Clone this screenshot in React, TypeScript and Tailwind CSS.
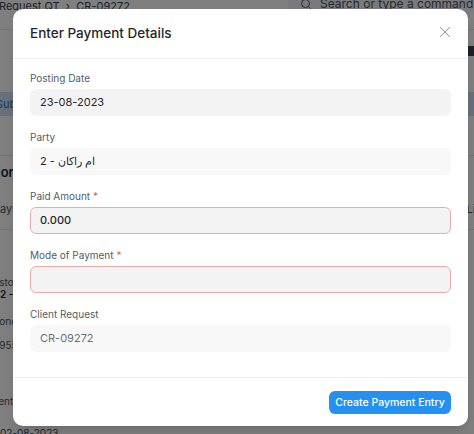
import { X, Search } from 'lucide-react'

interface FieldProps {
  label: string;
  value?: string;
  required?: boolean;
  tone?: 'normal' | 'error' | 'readonly' | 'muted';
}

const Field: React.FC<FieldProps> = ({ label, value, required, tone = 'normal' }) => {
  const box =
    tone === 'error'
      ? 'bg-[#f3f3f3] border border-[#eeaaaa] text-[#1f272e] font-medium'
      : tone === 'readonly'
        ? 'bg-[#f8f8f8] border border-transparent text-[#1f272e]'
        : tone === 'muted'
          ? 'bg-[#f8f8f8] border border-transparent text-[#6b7280]'
          : 'bg-[#f3f3f3] border border-transparent text-[#1f272e]'

  return (
    <div className="mb-[15px]">
      <div className="mb-[5px] flex h-[12px] items-center text-[10px] leading-none text-[#525c66]">
        {label}
        {required && <span className="ml-[3px] text-[#e35a5a]">*</span>}
      </div>
      <div className={`flex h-[27px] items-center rounded-[6px] pl-[9px] text-[11px] ${box}`}>
        {value}
      </div>
    </div>
  )
}

export default function App() {
  return (
    <div className="relative h-[434px] w-[474px] overflow-hidden bg-white font-['Inter',sans-serif]">
      {/* page behind the dialog */}
      <div className="flex flex-col text-[#1f272e]">
        <div className="flex h-[30px] items-start border-b border-gray-200">
          <div className="-ml-[1px] -mt-[2px] whitespace-nowrap text-[11px] text-gray-700">Request QT &nbsp;›&nbsp; CR-09272</div>
          <div className="ml-auto -mt-[6px] flex h-[20px] w-[186px] items-center gap-2 overflow-hidden whitespace-nowrap rounded-md bg-gray-100 pl-[12px] text-[12px] text-gray-600">
            <Search size={12} className="shrink-0" />
            Search or type a command (Ctrl+G)
          </div>
        </div>
        <div className="flex h-[62px] items-start justify-end pt-[16px]">
          <div className="h-[10px] w-[10px] bg-gray-700" />
        </div>
        <div className="flex h-[24px] items-stretch justify-between">
          <div className="-ml-[10px] flex items-center rounded-r bg-[#cfe3f8] px-[6px] text-[11px] text-[#2a6fb5]">Submit</div>
          <div className="w-[20px] bg-[#cfe3f8]" />
        </div>
        <div className="h-[40px] border-b border-gray-200" />
        <div className="flex h-[34px] items-center text-[13px] font-semibold">
          <span className="-ml-[31px]">Section</span>
        </div>
        <div className="flex h-[40px] items-center justify-between border-b border-gray-200 text-[11px] text-gray-600">
          <span className="-ml-[7px]">Payment</span>
          <span className="-mr-[14px]">Link</span>
        </div>
        <div className="h-[46px]" />
        <div className="flex h-[12px] items-center text-[10px] text-gray-600">
          <span className="-ml-[14px]">Customer</span>
        </div>
        <div className="flex h-[13px] items-center text-[10px] font-semibold">
          <span>2 - ام راكان</span>
        </div>
        <div className="flex h-[28px] items-end text-[10px] text-gray-600">
          <span className="-ml-[13px]">Phone</span>
        </div>
        <div className="flex h-[24px] items-end text-[10px] text-gray-600">
          <span className="-ml-[7px]">0955123456</span>
        </div>
        <div className="flex h-[56px] items-end text-[10px] text-gray-600">
          <span className="-ml-[14px]">Client</span>
        </div>
        <div className="flex h-[32px] items-end text-[10px] text-gray-700">
          <span>02-08-2023</span>
        </div>
      </div>

      <div className="absolute inset-0 bg-black/50" />

      {/* dialog */}
      <div className="absolute left-[13px] top-[9px] w-[455px] rounded-[10px] bg-white shadow-lg">
        <div className="flex h-[50px] items-center justify-between border-b border-[#ededed] px-[17px]">
          <h2 className="text-[13.5px] font-medium text-[#1f272e]">Enter Payment Details</h2>
          <X size={18} strokeWidth={1.4} className="mr-[-3px] mt-[-4px] text-[#8d99a6]" />
        </div>

        <div className="px-[17px] pb-[10px] pt-[13px]">
          <Field label="Posting Date" value="23-08-2023" />
          <Field label="Party" value="ام راكان - 2" tone="readonly" />
          <Field label="Paid Amount" value="0.000" required tone="error" />
          <Field label="Mode of Payment" required tone="error" />
          <Field label="Client Request" value="CR-09272" tone="muted" />
        </div>

        <div className="flex justify-end border-t border-[#ededed] px-[17px] pb-[12px] pt-[13px]">
          <button className="flex h-[23px] w-[122px] items-center justify-center rounded-[6px] bg-[#2490ef] text-[10.5px] font-medium text-white">
            Create Payment Entry
          </button>
        </div>
      </div>
    </div>
  )
}
